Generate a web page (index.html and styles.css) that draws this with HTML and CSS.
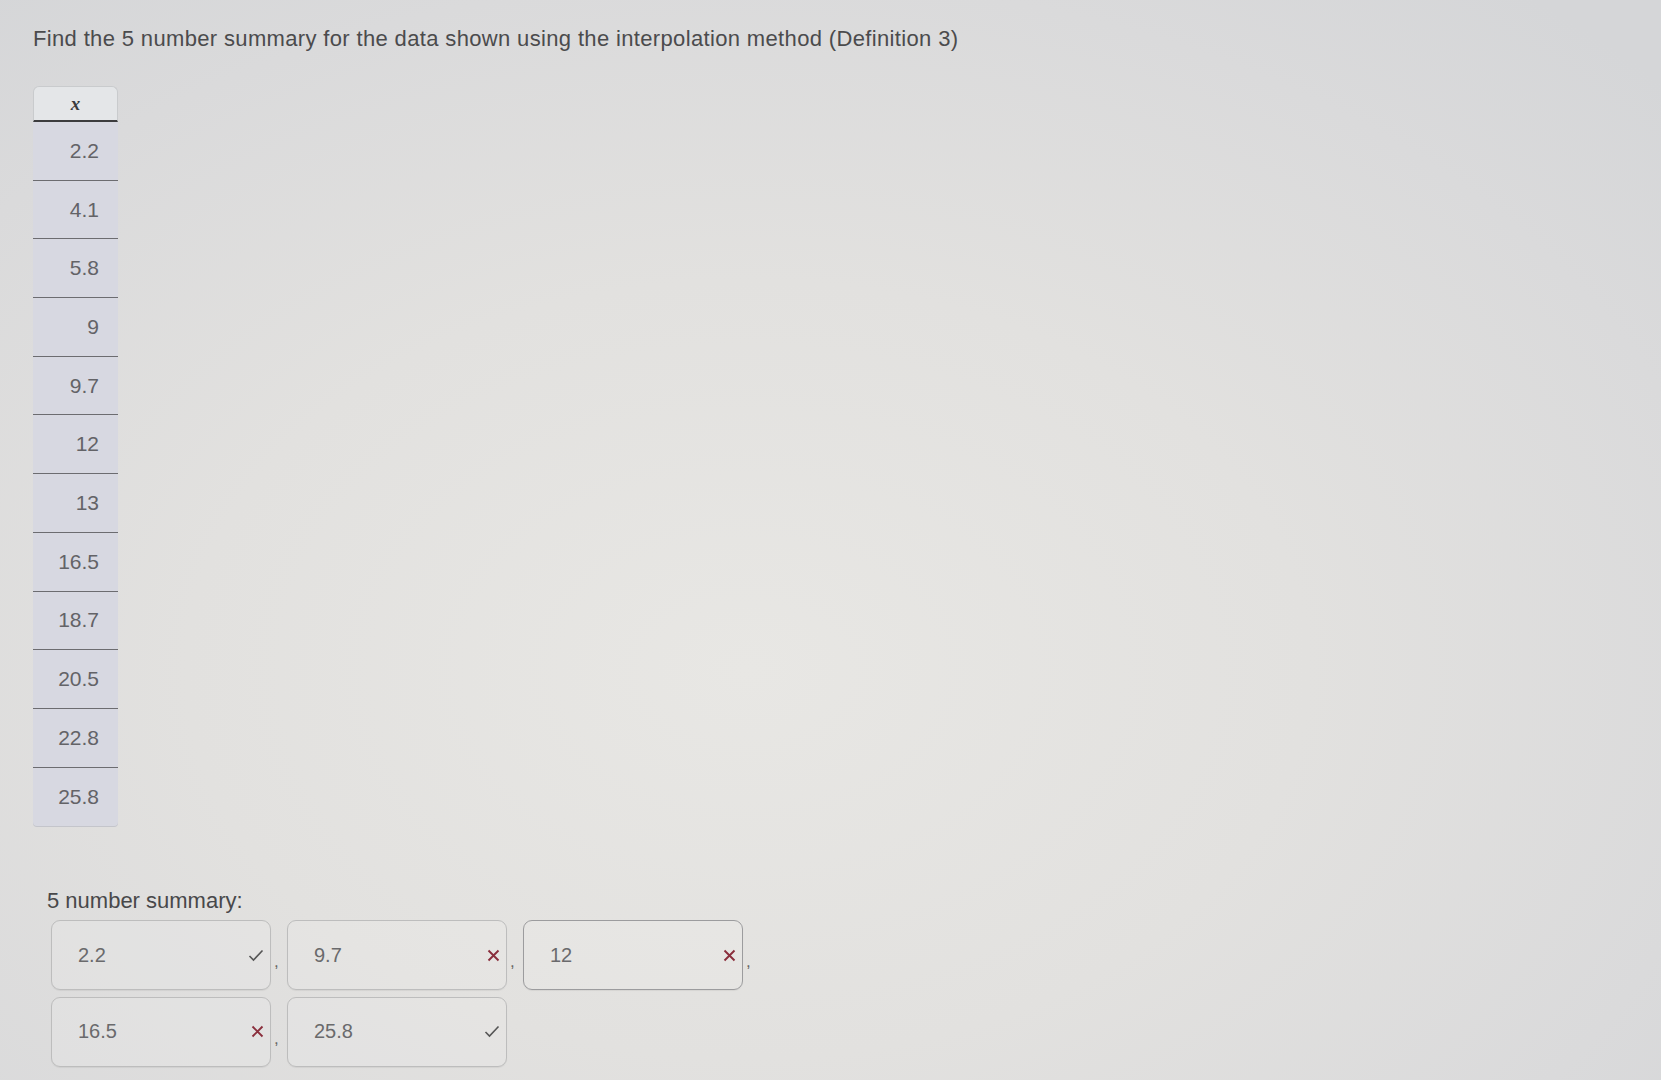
FILE: index.html
```html
<!DOCTYPE html>
<html>
<head>
<meta charset="utf-8">
<link rel="stylesheet" href="styles.css">
</head>
<body>
<div class="page">
  <p class="title">Find the 5 number summary for the data shown using the interpolation method (Definition 3)</p>
  <div class="table">
    <div class="thead"><span class="var">x</span></div>
    <div class="row">2.2</div>
    <div class="row">4.1</div>
    <div class="row">5.8</div>
    <div class="row">9</div>
    <div class="row">9.7</div>
    <div class="row">12</div>
    <div class="row">13</div>
    <div class="row">16.5</div>
    <div class="row">18.7</div>
    <div class="row">20.5</div>
    <div class="row">22.8</div>
    <div class="row last">25.8</div>
  </div>
  <p class="label">5 number summary:</p>
  <div class="answers">
    <div class="item">
      <div class="box"><span>2.2</span>
        <svg class="ok" width="16" height="13" viewBox="0 0 16 13"><path d="M1.5 7 L5.5 11 L14.5 1.5" fill="none" stroke="#555" stroke-width="1.6"/></svg>
      </div><span class="comma">,</span>
    </div>
    <div class="item">
      <div class="box"><span>9.7</span>
        <svg class="no" width="13" height="13" viewBox="0 0 13 13"><path d="M1.5 1.5 L11.5 11.5 M11.5 1.5 L1.5 11.5" fill="none" stroke="#8a2e3c" stroke-width="1.9"/></svg>
      </div><span class="comma">,</span>
    </div>
    <div class="item">
      <div class="box dark"><span>12</span>
        <svg class="no" width="13" height="13" viewBox="0 0 13 13"><path d="M1.5 1.5 L11.5 11.5 M11.5 1.5 L1.5 11.5" fill="none" stroke="#8a2e3c" stroke-width="1.9"/></svg>
      </div><span class="comma">,</span>
    </div>
    <div class="item">
      <div class="box"><span>16.5</span>
        <svg class="no" width="13" height="13" viewBox="0 0 13 13"><path d="M1.5 1.5 L11.5 11.5 M11.5 1.5 L1.5 11.5" fill="none" stroke="#8a2e3c" stroke-width="1.9"/></svg>
      </div><span class="comma">,</span>
    </div>
    <div class="item">
      <div class="box"><span>25.8</span>
        <svg class="ok" width="16" height="13" viewBox="0 0 16 13"><path d="M1.5 7 L5.5 11 L14.5 1.5" fill="none" stroke="#555" stroke-width="1.6"/></svg>
      </div>
    </div>
  </div>
</div>
</body>
</html>
```
FILE: styles.css
```css
html, body {
  margin: 0;
  padding: 0;
}
body {
  width: 1661px;
  height: 1080px;
  overflow: hidden;
  font-family: "Liberation Sans", Arial, sans-serif;
  background: radial-gradient(ellipse 75% 80% at 45% 62%, #e8e7e4 0%, #e2e1df 45%, #dadadb 80%, #d5d6d8 100%);
}
.page {
  padding: 25px 0 0 33px;
}
.title {
  margin: 0;
  font-size: 22px;
  line-height: 27px;
  color: #4b4b4d;
  letter-spacing: 0.35px;
}
.table {
  margin-top: 34px;
  width: 85px;
}
.thead {
  box-sizing: border-box;
  height: 36px;
  background: #e4e6e8;
  border: 1px solid #c9cbcd;
  border-bottom: 2px solid #3c3c3e;
  border-radius: 6px 6px 0 0;
  display: flex;
  align-items: center;
  justify-content: center;
}
.var {
  font-family: "Liberation Serif", serif;
  font-style: italic;
  font-weight: bold;
  font-size: 19px;
  color: #3a3a3c;
}
.row {
  box-sizing: border-box;
  height: 58.7px;
  background: #d7d8e1;
  border-bottom: 1px solid #6c6c70;
  display: flex;
  align-items: center;
  justify-content: flex-end;
  padding-right: 19px;
  font-size: 21px;
  color: #636367;
}
.row.last {
  border-bottom: none;
  border-radius: 0 0 4px 4px;
  box-shadow: 0 1px 0 #c4c5cb;
}
.label {
  margin: 62px 0 0 14px;
  font-size: 22px;
  line-height: 26px;
  color: #48484a;
}
.answers {
  margin: 6px 0 0 18px;
  width: 712px;
  display: flex;
  flex-wrap: wrap;
  row-gap: 6.5px;
}
.item {
  display: flex;
  width: 236px;
}
.box {
  box-sizing: border-box;
  width: 220px;
  height: 70px;
  border: 1px solid #bdbdbd;
  border-radius: 9px;
  background: rgba(255, 255, 255, 0.12);
  box-shadow: 0 1px 1px rgba(0, 0, 0, 0.06);
  display: flex;
  align-items: center;
  justify-content: space-between;
  padding: 0 6px 0 26px;
  font-size: 20px;
  color: #6a6a6c;
}
.box.dark {
  border-color: #9c9c9e;
}
.comma {
  padding: 32px 0 0 3px;
  font-size: 17px;
  color: #666;
}
```
